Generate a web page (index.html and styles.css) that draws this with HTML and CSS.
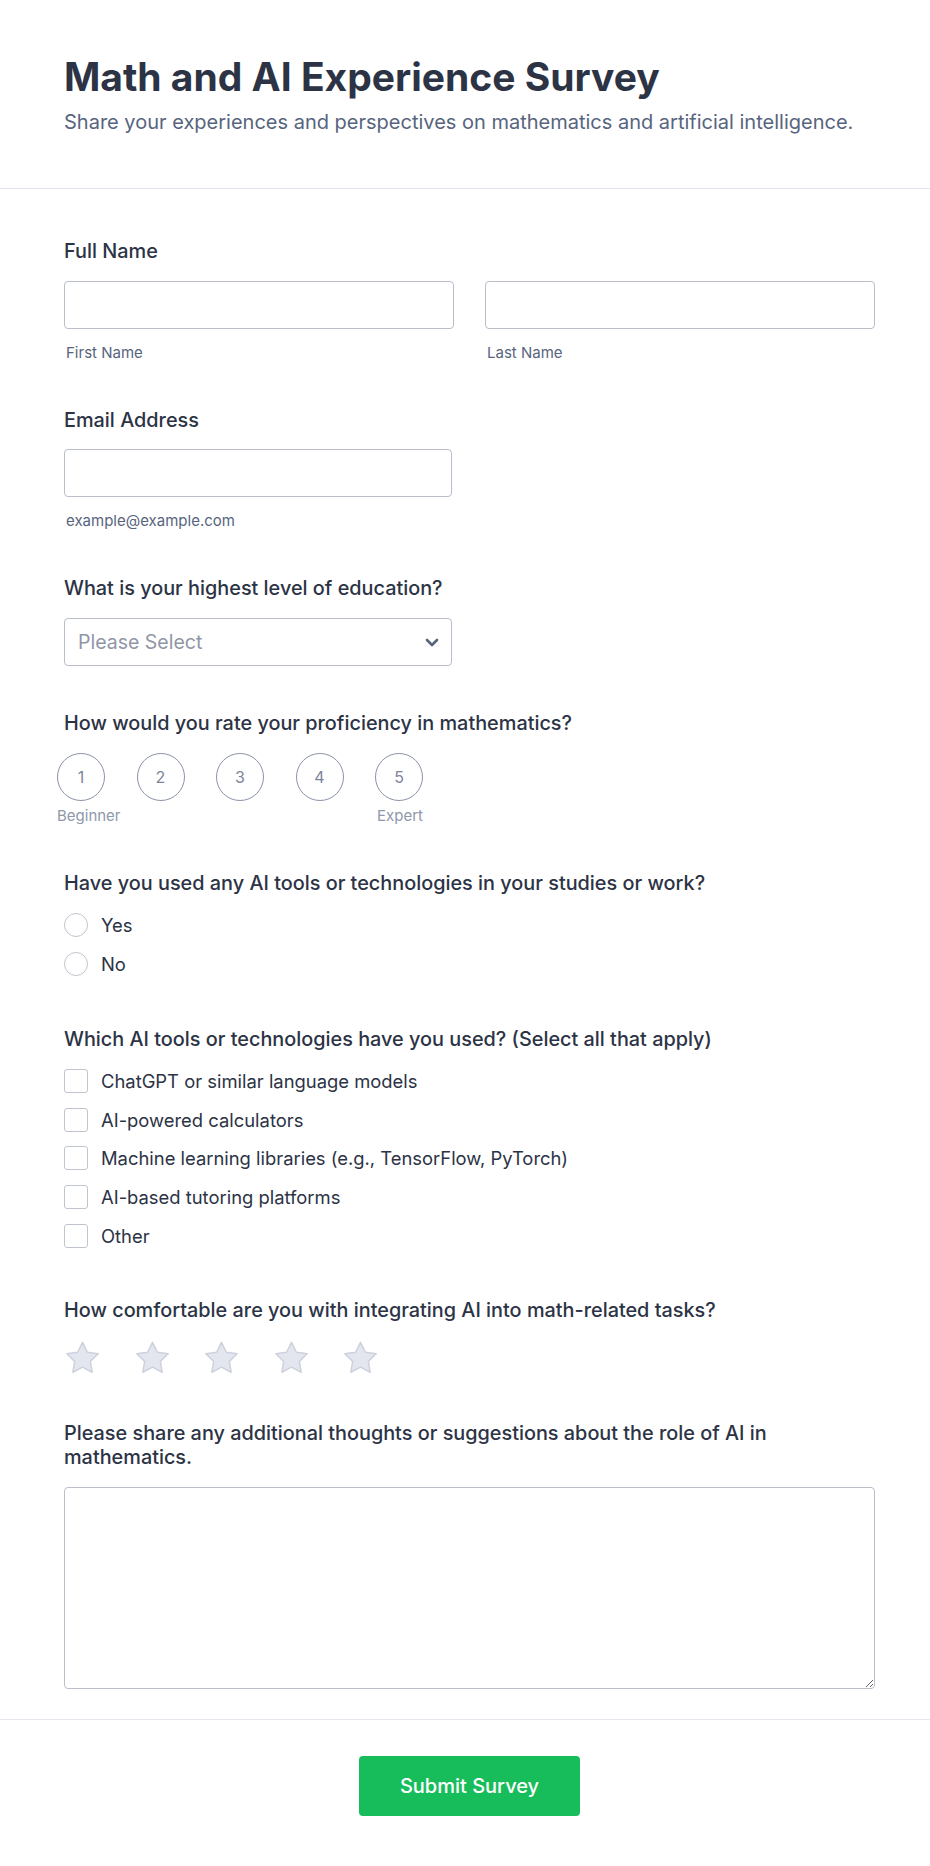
FILE: index.html
```html
<!DOCTYPE html>
<html lang="en">
<head>
<meta charset="utf-8">
<title>Math and AI Experience Survey</title>
<link rel="stylesheet" href="styles.css">
</head>
<body>
<header class="header">
  <h1 class="title">Math and AI Experience Survey</h1>
  <p class="subtitle">Share your experiences and perspectives on mathematics and artificial intelligence.</p>
</header>

<main class="form">
  <div class="field">
    <div class="label">Full Name</div>
    <div class="name-row">
      <div class="name-col">
        <input class="input" type="text" aria-label="First Name">
        <div class="sublabel">First Name</div>
      </div>
      <div class="name-col">
        <input class="input" type="text" aria-label="Last Name">
        <div class="sublabel">Last Name</div>
      </div>
    </div>
  </div>

  <div class="field">
    <div class="label">Email Address</div>
    <input class="input input-half" type="email" aria-label="Email Address">
    <div class="sublabel">example@example.com</div>
  </div>

  <div class="field">
    <div class="label">What is your highest level of education?</div>
    <div class="select">
      <span class="select-text">Please Select</span>
      <svg class="chevron" width="14" height="9" viewBox="0 0 14 9"><path d="M2 2 L7 7 L12 2" fill="none" stroke="#57647e" stroke-width="2.6" stroke-linecap="round" stroke-linejoin="round"/></svg>
    </div>
  </div>

  <div class="field">
    <div class="label">How would you rate your proficiency in mathematics?</div>
    <div class="scale">
      <div class="scale-row">
        <span class="circle">1</span>
        <span class="circle">2</span>
        <span class="circle">3</span>
        <span class="circle">4</span>
        <span class="circle">5</span>
      </div>
      <div class="scale-legend">
        <span>Beginner</span>
        <span>Expert</span>
      </div>
    </div>
  </div>

  <div class="field">
    <div class="label">Have you used any AI tools or technologies in your studies or work?</div>
    <div class="options options-radio">
      <div class="option"><span class="radio"></span><span>Yes</span></div>
      <div class="option"><span class="radio"></span><span>No</span></div>
    </div>
  </div>

  <div class="field">
    <div class="label">Which AI tools or technologies have you used? (Select all that apply)</div>
    <div class="options">
      <div class="option"><span class="checkbox"></span><span>ChatGPT or similar language models</span></div>
      <div class="option"><span class="checkbox"></span><span>AI-powered calculators</span></div>
      <div class="option"><span class="checkbox"></span><span>Machine learning libraries (e.g., TensorFlow, PyTorch)</span></div>
      <div class="option"><span class="checkbox"></span><span>AI-based tutoring platforms</span></div>
      <div class="option"><span class="checkbox"></span><span>Other</span></div>
    </div>
  </div>

  <div class="field">
    <div class="label">How comfortable are you with integrating AI into math-related tasks?</div>
    <div class="stars">
      <svg class="star" viewBox="0 0 40 38"><path d="M20 2.5 L25.3 13.3 L37 15 L28.5 23.3 L30.5 35 L20 29.5 L9.5 35 L11.5 23.3 L3 15 L14.7 13.3 Z" fill="#e3e6ef" stroke="#cdd1dc" stroke-width="1.6" stroke-linejoin="round"/></svg>
      <svg class="star" viewBox="0 0 40 38"><path d="M20 2.5 L25.3 13.3 L37 15 L28.5 23.3 L30.5 35 L20 29.5 L9.5 35 L11.5 23.3 L3 15 L14.7 13.3 Z" fill="#e3e6ef" stroke="#cdd1dc" stroke-width="1.6" stroke-linejoin="round"/></svg>
      <svg class="star" viewBox="0 0 40 38"><path d="M20 2.5 L25.3 13.3 L37 15 L28.5 23.3 L30.5 35 L20 29.5 L9.5 35 L11.5 23.3 L3 15 L14.7 13.3 Z" fill="#e3e6ef" stroke="#cdd1dc" stroke-width="1.6" stroke-linejoin="round"/></svg>
      <svg class="star" viewBox="0 0 40 38"><path d="M20 2.5 L25.3 13.3 L37 15 L28.5 23.3 L30.5 35 L20 29.5 L9.5 35 L11.5 23.3 L3 15 L14.7 13.3 Z" fill="#e3e6ef" stroke="#cdd1dc" stroke-width="1.6" stroke-linejoin="round"/></svg>
      <svg class="star" viewBox="0 0 40 38"><path d="M20 2.5 L25.3 13.3 L37 15 L28.5 23.3 L30.5 35 L20 29.5 L9.5 35 L11.5 23.3 L3 15 L14.7 13.3 Z" fill="#e3e6ef" stroke="#cdd1dc" stroke-width="1.6" stroke-linejoin="round"/></svg>
    </div>
  </div>

  <div class="field">
    <div class="label">Please share any additional thoughts or suggestions about the role of AI in mathematics.</div>
    <textarea class="textarea" aria-label="Additional thoughts"></textarea>
  </div>
</main>

<footer class="footer">
  <button class="submit" type="button">Submit Survey</button>
</footer>
</body>
</html>
```

FILE: styles.css
```css
* { box-sizing: border-box; }

body {
  margin: 0;
  background: #ffffff;
  color: #2c3345;
  font-family: Inter, "Noto Sans", "Liberation Sans", sans-serif;
}

.header {
  padding: 53px 55px 51px 64px;
  border-bottom: 1px solid #e3e4f0;
}

.title {
  margin: 0;
  font-size: 39px;
  line-height: 47px;
  font-weight: 700;
  color: #2c3345;
}

.subtitle {
  margin: 7px 0 0;
  font-size: 20px;
  line-height: 30px;
  color: #57647e;
}

.form {
  display: flex;
  flex-direction: column;
  gap: 45px;
  padding: 50px 55px 30px 64px;
}

.label {
  font-size: 19.85px;
  line-height: 24px;
  font-weight: 500;
  color: #2c3345;
  margin-bottom: 18px;
}

.name-row {
  display: grid;
  grid-template-columns: 1fr 1fr;
  column-gap: 31px;
}

.input {
  display: block;
  width: 100%;
  height: 48px;
  border: 1px solid #b8bdc9;
  border-radius: 4px;
  background: #fff;
  font: inherit;
}

.input-half { width: 388px; margin-top: -1px; }

.sublabel {
  margin-top: 14px;
  font-size: 15px;
  line-height: 20px;
  color: #57647e;
  padding-left: 2px;
}

.select {
  width: 388px;
  height: 48px;
  border: 1px solid #b8bdc9;
  border-radius: 4px;
  display: flex;
  align-items: center;
  justify-content: space-between;
  padding: 0 12px 0 13px;
}

.select-text {
  font-size: 19.5px;
  color: #8f96a6;
}

.scale { margin-left: -7px; width: 366px; }

.scale-row {
  display: flex;
  justify-content: space-between;
}

.circle {
  width: 48px;
  height: 48px;
  border: 1px solid #8a93a8;
  border-radius: 50%;
  display: flex;
  align-items: center;
  justify-content: center;
  font-size: 16px;
  color: #7c859b;
}

.scale-legend {
  margin-top: 5px;
  display: flex;
  justify-content: space-between;
  font-size: 15px;
  line-height: 20px;
  color: #8d98ac;
}

.options {
  display: flex;
  flex-direction: column;
  gap: 14.7px;
  padding-bottom: 5px;
}

.options-radio { gap: 15px; padding-bottom: 6px; }

.option {
  display: flex;
  align-items: center;
  min-height: 24px;
  font-size: 18.4px;
  color: #2c3345;
}

.radio {
  width: 24px;
  height: 24px;
  border: 1px solid #bfc4ce;
  border-radius: 50%;
  margin-right: 13px;
  flex: none;
}

.checkbox {
  width: 24px;
  height: 24px;
  border: 1px solid #bfc4ce;
  border-radius: 3px;
  margin-right: 13px;
  flex: none;
}

.stars {
  display: flex;
  gap: 32.5px;
  padding-bottom: 1px;
}

.star {
  width: 37px;
  height: 35px;
  display: block;
}

.textarea {
  display: block;
  width: 100%;
  height: 202px;
  border: 1px solid #b8bdc9;
  border-radius: 4px;
  font: inherit;
  resize: vertical;
}

.footer {
  border-top: 1px solid #e6e8ef;
  padding: 36px 55px 49px 64px;
  display: flex;
  justify-content: center;
}

.submit {
  width: 221px;
  height: 60px;
  background: #18bd5b;
  color: #ffffff;
  border: none;
  border-radius: 4px;
  font-family: Inter, "Noto Sans", "Liberation Sans", sans-serif;
  font-size: 20px;
  font-weight: 500;
}
```
